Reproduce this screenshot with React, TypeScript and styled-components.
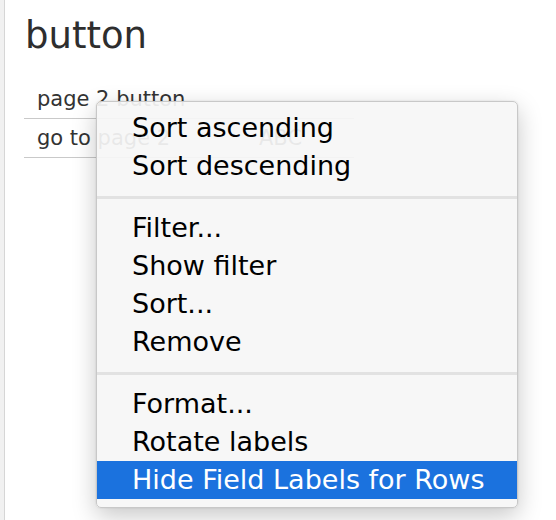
import React, { FC } from 'react'
import styled, { createGlobalStyle } from 'styled-components'

const GlobalStyle = createGlobalStyle`
    html, body {
        margin: 0;
        padding: 0;
        background: #ffffff;
    }
    body {
        font-family: "DejaVu Sans", Verdana, sans-serif;
    }
`;

const Page = styled.div`
    position: relative;
    display: flex;
    width: 556px;
    height: 520px;
    overflow: hidden;
    background: #ffffff;
`;

const SideEdge = styled.div`
    width: 4px;
    flex-shrink: 0;
    background: #f1f1f1;
    border-right: 1px solid #d6d6d6;
`;

const Content = styled.div`
    flex: 1;
    padding-left: 19px;
`;

const Title = styled.h1`
    margin: 17px 0 0 1px;
    font-size: 37px;
    line-height: 37px;
    font-weight: normal;
    color: #2e2e2e;
`;

const Table = styled.table`
    margin-top: 26px;
    width: 330px;
    border-collapse: collapse;
    font-size: 21px;
    line-height: 25px;
    color: #333333;
`;

const Row = styled.tr`
    border-bottom: 1px solid #c9c9c9;
`;

const Cell = styled.td<{ $width?: number }>`
    padding: 7px 13px 6px 13px;
    white-space: nowrap;
    width: ${p => (p.$width ? `${p.$width}px` : 'auto')};
`;

const Menu = styled.div`
    position: absolute;
    left: 96px;
    top: 101px;
    width: 420px;
    padding: 7px 0 8px 0;
    background: rgba(246, 246, 246, 0.93);
    border: 1px solid #c8c8c8;
    border-radius: 5px;
    box-shadow: 0 8px 24px rgba(0, 0, 0, 0.22), 0 0 2px rgba(0, 0, 0, 0.12);
`;

const Item = styled.div<{ $active?: boolean }>`
    height: 38px;
    padding-left: 35px;
    font-size: 27px;
    line-height: 38px;
    white-space: nowrap;
    color: ${p => (p.$active ? '#ffffff' : '#000000')};
    background: ${p => (p.$active ? '#1b72de' : 'transparent')};
`;

const Separator = styled.div`
    height: 3px;
    margin: 11px 0 10px 0;
    background: #e2e2e2;
`;

const groups: string[][] = [
    ['Sort ascending', 'Sort descending'],
    ['Filter...', 'Show filter', 'Sort...', 'Remove'],
    ['Format...', 'Rotate labels', 'Hide Field Labels for Rows'],
]

const App: FC = () => {
    return (
        <>
            <GlobalStyle />
            <Page>
                <SideEdge />
                <Content>
                    <Title>button</Title>
                    <Table>
                        <tbody>
                            <Row>
                                <Cell $width={196}>page 2 button</Cell>
                                <Cell></Cell>
                            </Row>
                            <Row>
                                <Cell $width={196}>go to page 2</Cell>
                                <Cell>ABC</Cell>
                            </Row>
                        </tbody>
                    </Table>
                </Content>
                <Menu>
                    {groups.map((group, gi) => (
                        <React.Fragment key={gi}>
                            {gi > 0 ? <Separator /> : null}
                            {group.map(label => (
                                <Item key={label} $active={label === 'Hide Field Labels for Rows'}>
                                    {label}
                                </Item>
                            ))}
                        </React.Fragment>
                    ))}
                </Menu>
            </Page>
        </>
    )
}

export default App
